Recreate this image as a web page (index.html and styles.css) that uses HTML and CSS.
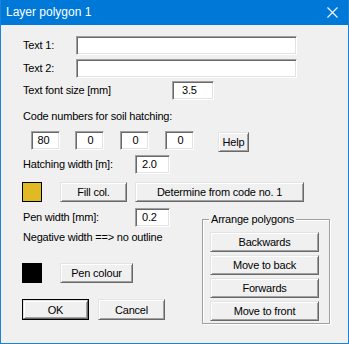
FILE: index.html
```html
<!DOCTYPE html>
<html>
<head>
<meta charset="utf-8">
<link rel="stylesheet" href="styles.css">
</head>
<body>
<div class="window">
  <div class="titlebar">
    <span class="title">Layer polygon 1</span>
    <svg class="close" width="11" height="11" viewBox="0 0 11 11"><path d="M0.5 0.5 L10.5 10.5 M10.5 0.5 L0.5 10.5" stroke="#fff" stroke-width="1.1" fill="none"/></svg>
  </div>
  <div class="content">
    <div class="row r-text1">
      <span class="lbl w-text">Text 1:</span>
      <div class="edit w-long"></div>
    </div>
    <div class="row r-text2">
      <span class="lbl w-text">Text 2:</span>
      <div class="edit w-long"></div>
    </div>
    <div class="row r-size">
      <span class="lbl w-size">Text font size [mm]</span>
      <div class="edit w-size-in pad9">3.5</div>
    </div>
    <div class="caption r-codes-lbl">Code numbers for soil hatching:</div>
    <div class="row r-codes">
      <div class="edit code c1">80</div>
      <div class="edit code c2">0</div>
      <div class="edit code c3">0</div>
      <div class="edit code c3">0</div>
      <button class="btn help">Help</button>
    </div>
    <div class="row r-hatch">
      <span class="lbl w-hatch">Hatching width [m]:</span>
      <div class="edit w-small pad6">2.0</div>
    </div>
    <div class="row r-fill">
      <div class="swatch gold"></div>
      <button class="btn b-fill">Fill col.</button>
      <button class="btn b-det">Determine from code no. 1</button>
    </div>
    <div class="bottom">
      <div class="leftcol">
        <div class="row r-pen">
          <span class="lbl w-hatch">Pen width [mm]:</span>
          <div class="edit w-small pad6">0.2</div>
        </div>
        <div class="caption r-neg">Negative width ==&gt; no outline</div>
        <div class="row r-pencol">
          <div class="swatch black"></div>
          <button class="btn b-pen">Pen colour</button>
        </div>
        <div class="row r-ok">
          <div class="defbtn"><button class="btn b-ok">OK</button></div>
          <button class="btn b-cancel">Cancel</button>
        </div>
      </div>
      <div class="group">
        <span class="legend">Arrange polygons</span>
        <button class="btn gbtn">Backwards</button>
        <button class="btn gbtn">Move to back</button>
        <button class="btn gbtn">Forwards</button>
        <button class="btn gbtn">Move to front</button>
      </div>
    </div>
  </div>
</div>
</body>
</html>
```
FILE: styles.css
```css
html, body {
  margin: 0;
  padding: 0;
  background: #f0f0f0;
}
.window {
  width: 349px;
  height: 344px;
  box-sizing: border-box;
  border: 1px solid #1883d7;
  border-top: none;
  background: #f0f0f0;
  font-family: "Liberation Sans", Arial, sans-serif;
  font-size: 11px;
  letter-spacing: -0.2px;
  color: #000;
  overflow: hidden;
}
.titlebar {
  height: 25px;
  margin: 0 -1px;
  background: #0078d7;
  display: flex;
  align-items: center;
  justify-content: space-between;
  padding: 0 11px 0 6px;
}
.title {
  color: #fff;
  font-size: 12px;
  letter-spacing: 0;
  line-height: 14px;
  margin-top: -1px;
}
.close {
  display: block;
  margin-top: -1px;
}
.content {
  padding: 11px 0 0 21px;
}
.row {
  display: flex;
  align-items: center;
}
.lbl {
  line-height: 13px;
  padding-left: 1px;
}
.caption {
  line-height: 13px;
  padding-left: 1px;
}
.w-text { width: 53px; }
.w-size { width: 149px; }
.w-hatch { width: 112px; }
.edit {
  box-sizing: border-box;
  height: 19px;
  background: #fff;
  border-style: solid;
  border-width: 1px;
  border-color: #a0a0a0 #fff #fff #a0a0a0;
  box-shadow: inset 1px 1px 0 #696969, inset -1px -1px 0 #e3e3e3;
  line-height: 17px;
  white-space: nowrap;
}
.w-long { width: 221px; }
.w-size-in { width: 42px; }
.w-small { width: 35px; }
.pad9 { padding-left: 9px; }
.pad6 { padding-left: 6px; }
.r-text1 { height: 19px; }
.r-text2 { height: 19px; margin-top: 4px; }
.r-size { height: 19px; margin-top: 3px; }
.r-codes-lbl { margin-top: 10px; }
.r-codes { height: 20px; margin-top: 8px; align-items: flex-start; }
.code { width: 29px; text-align: center; }
.c1 { margin-left: 9px; padding-right: 4px; }
.c2 { margin-left: 15px; padding-left: 2px; }
.c3 { margin-left: 16px; padding-left: 2px; }
.btn {
  box-sizing: border-box;
  height: 20px;
  margin: 0;
  padding: 0;
  background: #f0f0f0;
  border-style: solid;
  border-width: 1px;
  border-color: #e3e3e3 #696969 #696969 #e3e3e3;
  box-shadow: inset 1px 1px 0 #fff, inset -1px -1px 0 #a0a0a0;
  font-family: "Liberation Sans", Arial, sans-serif;
  font-size: 11px;
  letter-spacing: -0.2px;
  font-weight: normal;
  color: #000;
  line-height: 16px;
  text-align: center;
}
.help { width: 31px; margin-left: 24px; margin-top: 1px; }
.r-hatch { height: 19px; margin-top: 4px; }
.r-fill { height: 20px; margin-top: 8px; }
.swatch {
  box-sizing: border-box;
  width: 20px;
  height: 20px;
  border: 1px solid #000;
}
.gold { background: #e1b920; }
.black { background: #000; }
.b-fill { width: 67px; margin-left: 18px; }
.b-det { width: 169px; margin-left: 8px; }
.bottom {
  display: flex;
  align-items: flex-start;
  margin-top: 6px;
}
.leftcol {
  width: 180px;
}
.r-pen { height: 19px; }
.r-neg { margin-top: 4px; }
.r-pencol { height: 20px; margin-top: 19px; }
.b-pen { width: 73px; margin-left: 18px; }
.r-ok { height: 21px; margin-top: 16px; }
.defbtn {
  box-sizing: border-box;
  width: 67px;
  height: 21px;
  border: 1px solid #000;
}
.b-ok { width: 65px; height: 19px; display: block; }
.b-cancel { width: 67px; height: 21px; margin-left: 9px; }
.group {
  position: relative;
  box-sizing: border-box;
  width: 128px;
  height: 105px;
  margin-top: 11px;
  border: 1px solid #a0a0a0;
  box-shadow: 1px 1px 0 #fff, inset 1px 1px 0 #fff;
  display: flex;
  flex-direction: column;
  gap: 3px;
  padding: 12px 0 0 7px;
}
.legend {
  position: absolute;
  left: 6px;
  top: -7px;
  padding: 0 2px;
  background: #f0f0f0;
  line-height: 13px;
}
.gbtn { width: 109px; height: 20px; }
```
